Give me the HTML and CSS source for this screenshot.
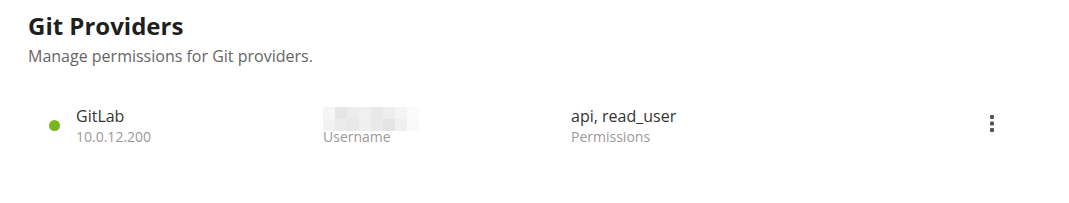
FILE: index.html
```html
<!DOCTYPE html>
<html lang="en">
  <head>
    <meta charset="UTF-8" />
    <meta name="viewport" content="width=device-width, initial-scale=1.0" />
    <link rel="stylesheet" href="styles.css">
    <title>Git Providers</title>
  </head>
  <body>
    <div class="page">
      <h1>Git Providers</h1>
      <p class="subtitle">Manage permissions for Git providers.</p>
      <div class="provider-row">
        <div class="provider-name">
          <span class="status-dot"></span>
          <div>
            <div class="value">GitLab</div>
            <div class="label">10.0.12.200</div>
          </div>
        </div>
        <div class="cell">
          <div class="blurred">
            <span></span><span></span><span></span><span></span><span></span><span></span><span></span><span></span>
            <span></span><span></span><span></span><span></span><span></span><span></span><span></span><span></span>
          </div>
          <div class="label">Username</div>
        </div>
        <div class="cell">
          <div class="value">api, read_user</div>
          <div class="label">Permissions</div>
        </div>
        <button class="menu" aria-label="More">
          <svg width="4" height="17" viewBox="0 0 4 17">
            <rect x="0" y="0" width="4" height="4" rx="1" fill="#555" />
            <rect x="0" y="6.5" width="4" height="4" rx="1" fill="#555" />
            <rect x="0" y="13" width="4" height="4" rx="1" fill="#555" />
          </svg>
        </button>
      </div>
    </div>
  </body>
</html>
```

FILE: styles.css
```css
* {
  margin: 0;
  padding: 0;
  box-sizing: border-box;
}
body {
  font-family: "Open Sans", "Noto Sans", sans-serif;
  color: #222;
  background: #fff;
}
.page {
  padding: 10px 67px 0 28px;
}
h1 {
  font-size: 24px;
  font-weight: 700;
  line-height: 32px;
  color: #1f1f1f;
}
.subtitle {
  font-size: 16px;
  line-height: 22px;
  color: #666;
  margin-top: 3px;
}
.provider-row {
  display: grid;
  grid-template-columns: 274px 248px 1fr 20px;
  align-items: center;
  margin-top: 39px;
  padding-left: 21px;
}
.provider-name {
  display: flex;
  align-items: center;
  gap: 16px;
}
.status-dot {
  width: 11px;
  height: 11px;
  border-radius: 50%;
  background: #79b61d;
  margin-top: -3px;
}
.value {
  font-size: 16px;
  line-height: 21px;
  color: #333;
}
.label {
  font-size: 14px;
  line-height: 20px;
  color: #9a9a9a;
}
.blurred {
  display: grid;
  grid-template-columns: repeat(8, 12px);
  grid-template-rows: 12px 12px;
  margin-top: 1px;
  margin-bottom: -4px;
}
.blurred span:nth-child(1) { background: #f5f5f5; }
.blurred span:nth-child(2) { background: #e6e6e6; }
.blurred span:nth-child(3) { background: #ececec; }
.blurred span:nth-child(4) { background: #f0f0f0; }
.blurred span:nth-child(5) { background: #e8e8e8; }
.blurred span:nth-child(6) { background: #eeeeee; }
.blurred span:nth-child(7) { background: #f4f4f4; }
.blurred span:nth-child(8) { background: #fbfbfb; }
.blurred span:nth-child(9) { background: #f2f2f2; }
.blurred span:nth-child(10) { background: #ebebeb; }
.blurred span:nth-child(11) { background: #e8e8e8; }
.blurred span:nth-child(12) { background: #efefef; }
.blurred span:nth-child(13) { background: #e9e9e9; }
.blurred span:nth-child(14) { background: #e4e4e4; }
.blurred span:nth-child(15) { background: #f0f0f0; }
.blurred span:nth-child(16) { background: #fafafa; }
.menu {
  border: none;
  background: none;
  width: 20px;
  height: 24px;
  display: flex;
  align-items: center;
  justify-content: center;
  margin-top: -6px;
}
```
